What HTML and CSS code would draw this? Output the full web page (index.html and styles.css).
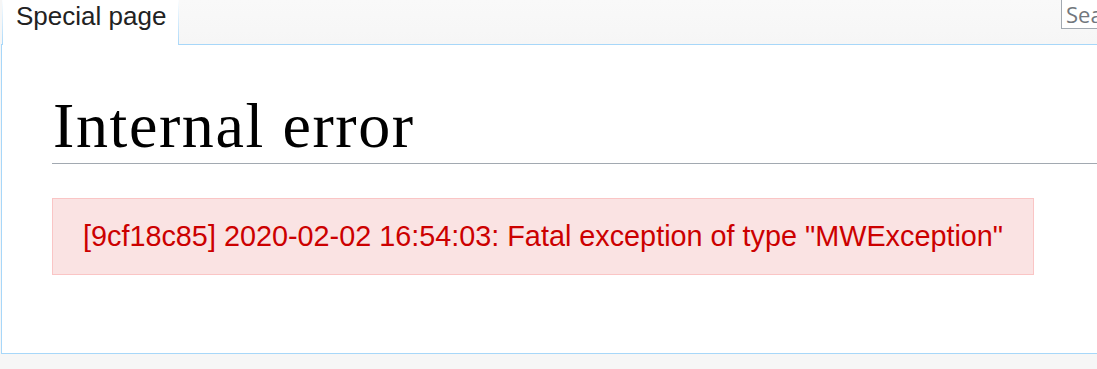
FILE: index.html
```html
<!DOCTYPE html>
<html>
<head>
<meta charset="utf-8">
<link rel="stylesheet" href="styles.css">
</head>
<body>
<div class="top">
  <div class="tab"><span>Special page</span></div>
  <div class="rest">
    <div class="search">Sea</div>
  </div>
</div>
<div class="content">
  <h1 class="heading">Internal error</h1>
  <div class="errorbox">[9cf18c85] 2020-02-02 16:54:03: Fatal exception of type "MWException"</div>
</div>
</body>
</html>
```
FILE: styles.css
```css
html, body {
  margin: 0;
  padding: 0;
  background: #f6f6f6;
  font-family: "Liberation Sans", Arial, sans-serif;
  overflow: hidden;
}
.top {
  display: flex;
  height: 45px;
  padding-left: 2px;
}
.tab {
  width: 177px;
  background: #fff;
  border-left: 1px solid;
  border-right: 1px solid;
  border-image: linear-gradient(to bottom, rgba(167,215,249,0) 0, #a7d7f9 100%) 1;
  border-top: none;
  border-bottom: none;
  box-sizing: border-box;
  padding-left: 13px;
  padding-top: 1px;
  font-size: 26px;
  color: #222;
  line-height: 30px;
}
.rest {
  flex: 1;
  background: linear-gradient(to bottom, #f9f9f9 0, #f6f6f6 100%);
  border-bottom: 1px solid #a7d7f9;
  box-sizing: border-box;
  display: flex;
  justify-content: flex-end;
  align-items: flex-start;
}
.search {
  width: 36px;
  height: 31px;
  margin-top: -2px;
  box-sizing: border-box;
  background: #fff;
  border: 1px solid #a2a9b1;
  border-right: none;
  font-family: "Open Sans", "DejaVu Sans", sans-serif;
  font-size: 22px;
  line-height: 30px;
  color: #72777d;
  padding-left: 4px;
  overflow: hidden;
  white-space: nowrap;
}
.content {
  background: #fff;
  margin-left: 1px;
  margin-top: -1px;
  border-left: 1px solid #a7d7f9;
  border-bottom: 1px solid #a7d7f9;
  height: 310px;
  box-sizing: border-box;
  padding: 44px 0 0 50px;
}
.heading {
  margin: 0;
  font-family: "Liberation Serif", Georgia, serif;
  font-weight: normal;
  font-size: 64px;
  letter-spacing: 1.6px;
  line-height: 75px;
  border-bottom: 1px solid #a2a9b1;
  color: #000;
  padding-left: 1px;
}
.errorbox {
  display: inline-block;
  margin-top: 34px;
  background: #fae3e3;
  border: 1px solid #fac5c5;
  color: #cc0000;
  font-size: 28.8px;
  line-height: 75px;
  padding: 0 30px;
}
```
